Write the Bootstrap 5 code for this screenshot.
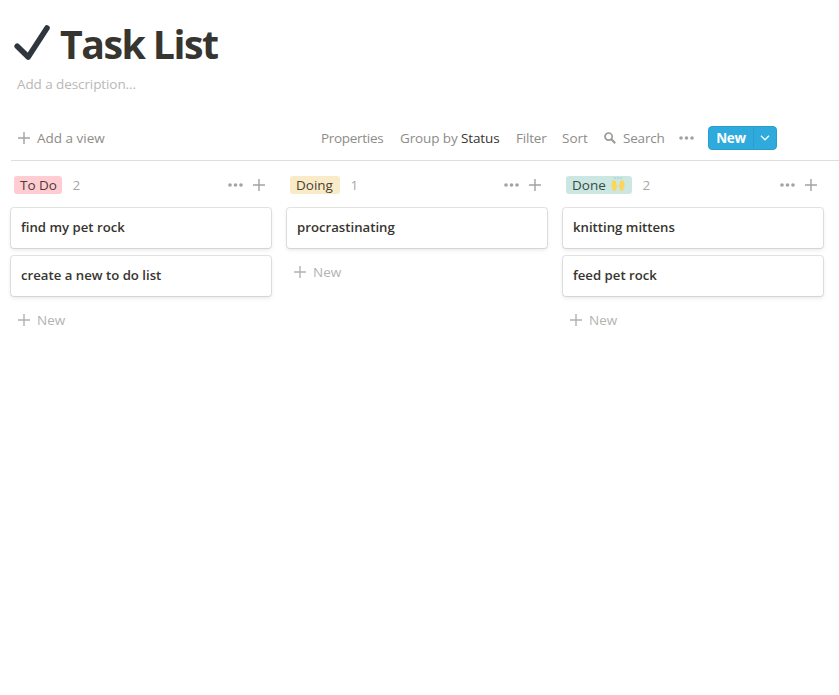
<!DOCTYPE html>
<html lang="en">
<head>
<meta charset="utf-8">
<meta name="viewport" content="width=device-width, initial-scale=1">
<title>Task List</title>
<link href="https://cdn.jsdelivr.net/npm/bootstrap@5.3.0/dist/css/bootstrap.min.css" rel="stylesheet">
<style>
body{font-family:"Open Sans","Noto Sans",sans-serif;font-size:13.5px;line-height:20px;color:#37352f;background:#fff;overflow:hidden}
svg{display:block;flex:none}
.page{padding:20px 0 0 11px}
.page-head{height:50px}
.page-title{font-size:39.3px;line-height:49px;font-weight:700;letter-spacing:-1.55px;margin-left:9px}
.descr{margin:4px 0 0 6px;color:#b9b8b5;letter-spacing:-.09px}
.toolbar{height:46px;margin-top:21px;border-bottom:1px solid #dededc;color:#8d8c88;padding:0 62px 0 7px}
.toolbar .btn-sm{font-size:13.5px;line-height:22px;height:24px;padding:0;color:#fff;background:#2eaadc;border:1px solid #2a9dcc;--bs-btn-hover-bg:#2596c4}
.toolbar .new-main{width:46px;font-weight:700;letter-spacing:-.3px}
.new-more{width:24px}
.icon-label{gap:7px}
.w-props{width:63px;margin-right:16px;letter-spacing:-.3px}
.w-group{width:99px;margin-right:17px;letter-spacing:-.12px}
.w-filter{width:30px;margin-right:16px;letter-spacing:-.2px}
.w-sort{width:26px;margin-right:16px}
.w-search{width:41px;margin:0 15px 0 7px;letter-spacing:-.2px}
.toolbar .dots{margin-right:14px}
.toolbar svg,.head-icons{color:#a3a29f}
.text-status{color:#37352f}
.board{gap:16px}
.board-col{width:260px;flex:none}
.col-head{height:47px;padding:0 6px 0 3px}
.head-icons{gap:10px}
.tag{height:18px;line-height:18px;border-radius:3px;padding:0 6px;color:#4b3c3c}
.tag-todo{width:48px;background:#ffccd1}
.tag-doing{width:50px;background:#faebc8;color:#494230}
.tag-done{width:66px;background:#cce7e1;color:#354c47}
.count{margin-left:10.5px;color:#a8a7a4}
.task{height:40px;line-height:38px;padding:0 10px;border:0;border-radius:3px;margin-bottom:8px;font-size:13.2px;font-weight:600;color:#37352f;box-shadow:0 0 0 1px rgba(15,15,15,.11),0 2px 4px rgba(15,15,15,.1)}
.add{padding:6px 0 0 7px;color:#b4b3b0}
</style>
</head>
<body>
<svg width="0" height="0" class="position-absolute">
<symbol id="plus" viewBox="0 0 12 12"><path d="M6 0v12M0 6h12" stroke="currentColor" stroke-width="1.4"/></symbol>
<symbol id="dots" viewBox="0 0 15 4"><g fill="currentColor"><circle cx="2" cy="2" r="1.8"/><circle cx="7.5" cy="2" r="1.8"/><circle cx="13" cy="2" r="1.8"/></g></symbol>
</svg>
<main class="page">
  <header class="page-head d-flex">
    <svg width="40" height="50" viewBox="0 0 40 50"><path d="M6.2 26.2L17.2 37L36 8" fill="none" stroke="#2f363d" stroke-width="5.6" stroke-linecap="round" stroke-linejoin="round"/></svg>
    <h1 class="page-title mb-0 text-nowrap">Task List</h1>
  </header>
  <div class="descr">Add a description...</div>
  <div class="toolbar d-flex align-items-center text-nowrap">
    <div class="d-flex align-items-center icon-label me-auto"><svg width="12" height="12"><use href="#plus"/></svg><span>Add a view</span></div>
    <span class="w-props">Properties</span>
    <span class="w-group">Group by <span class="text-status">Status</span></span>
    <span class="w-filter">Filter</span>
    <span class="w-sort">Sort</span>
    <svg width="12" height="12" viewBox="0 0 12 12" fill="none" stroke="#9b9a97"><circle cx="4.6" cy="4.6" r="3.6" stroke-width="1.7"/><path d="M7.3 7.3L11.2 11.2" stroke-width="2.1"/></svg>
    <span class="w-search">Search</span>
    <svg class="dots" width="15" height="4"><use href="#dots"/></svg>
    <div class="btn-group">
      <button class="btn btn-sm new-main">New</button>
      <button class="btn btn-sm new-more d-flex align-items-center justify-content-center" aria-label="More"><svg width="10" height="6" viewBox="0 0 10 6"><path d="M1 .8L5 4.8L9 .8" fill="none" stroke="#fff" stroke-width="1.3"/></svg></button>
    </div>
  </div>
  <div class="board d-flex text-nowrap">
    <section class="board-col">
      <div class="col-head d-flex align-items-center"><span class="tag tag-todo">To Do</span><span class="count me-auto">2</span><span class="d-flex align-items-center head-icons"><svg width="15" height="4"><use href="#dots"/></svg><svg width="12" height="12"><use href="#plus"/></svg></span></div>
      <div class="card task">find my pet rock</div>
      <div class="card task">create a new to do list</div>
      <div class="add d-flex align-items-center icon-label"><svg width="12" height="12"><use href="#plus"/></svg>New</div>
    </section>
    <section class="board-col">
      <div class="col-head d-flex align-items-center"><span class="tag tag-doing">Doing</span><span class="count me-auto">1</span><span class="d-flex align-items-center head-icons"><svg width="15" height="4"><use href="#dots"/></svg><svg width="12" height="12"><use href="#plus"/></svg></span></div>
      <div class="card task">procrastinating</div>
      <div class="add d-flex align-items-center icon-label"><svg width="12" height="12"><use href="#plus"/></svg>New</div>
    </section>
    <section class="board-col">
      <div class="col-head d-flex align-items-center"><span class="tag tag-done d-flex justify-content-between align-items-center">Done
        <svg width="16" height="16" viewBox="0 0 16 16"><g fill="#fbd65e"><path d="M2 4.2Q3 2.6 4 3.4Q5.4 2.6 6 4.4L6 8L7.2 7V9.5L5.6 13.8H3L1.4 9Z"/><path d="M14 4.2Q13 2.6 12 3.4Q10.6 2.6 10 4.4L10 8L8.8 7V9.5L10.4 13.8H13L14.6 9Z"/></g><path d="M4.5 .3L5.5 1.9M8 .2V2M11.5 .3L10.5 1.9" stroke="#8cc9df" stroke-width="1"/></svg></span><span class="count me-auto">2</span><span class="d-flex align-items-center head-icons"><svg width="15" height="4"><use href="#dots"/></svg><svg width="12" height="12"><use href="#plus"/></svg></span></div>
      <div class="card task">knitting mittens</div>
      <div class="card task">feed pet rock</div>
      <div class="add d-flex align-items-center icon-label"><svg width="12" height="12"><use href="#plus"/></svg>New</div>
    </section>
  </div>
</main>
<script src="https://cdn.jsdelivr.net/npm/bootstrap@5.3.0/dist/js/bootstrap.bundle.min.js"></script>
</body>
</html>
